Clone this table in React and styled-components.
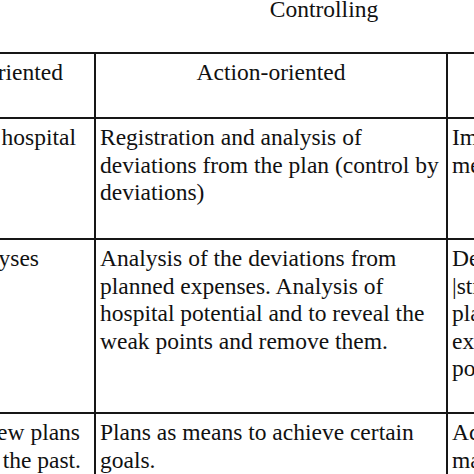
import styled, { createGlobalStyle } from 'styled-components'

const Global = createGlobalStyle`
  html, body {
    margin: 0;
    padding: 0;
    background: #FFFFFF;
    overflow: hidden;
  }
`

const Sheet = styled.div`
  width: 1148px;
  margin-left: -250px;
  font-family: "Liberation Serif", "Times New Roman", Times, serif;
  font-size: 23.5px;
  color: #111111;
`

const Caption = styled.div`
  height: 52px;
  line-height: 19px;
  text-align: center;
`

const Table = styled.div`
  display: grid;
  grid-template-columns: 342px 350px 448px;
  grid-template-rows: 63px 119px 172px 120px;
  gap: 2px;
  padding: 2px;
  background: #161616;
`

const Cell = styled.div`
  background: #FFFFFF;
  padding: 5px 4px;
  line-height: 27.5px;
  overflow: hidden;
  text-align: ${p => (p.$center ? 'center' : 'left')};
`

const Line = styled.span`
  display: block;
  white-space: nowrap;
`

const TailLine = styled(Line)`
  text-align: right;
  margin-right: ${p => p.$inset}px;
`

const ROWS = [
  {
    head: true,
    first: [{ text: 'Result-oriented', inset: 27 }],
    middle: ['Action-oriented'],
    last: ['Impulse-oriented'],
  },
  {
    first: [{ text: 'Planning of the hospital', inset: 14 }],
    middle: [
      'Registration and analysis of',
      'deviations from the plan (control by',
      'deviations)',
    ],
    last: ['Implementation of the', 'measures and control'],
  },
  {
    first: [{ text: 'Plan-fact analyses', inset: 51 }],
    middle: [
      'Analysis of the deviations from',
      'planned expenses. Analysis of',
      'hospital potential and to reveal the',
      'weak points and remove them.',
    ],
    last: ['Determination of', '|strategic', 'plans and', 'expected', 'potentials'],
  },
  {
    first: [
      { text: 'Development of new plans', inset: 10 },
      { text: 'extrapolating the past.', inset: 9 },
    ],
    middle: ['Plans as means to achieve certain', 'goals.'],
    last: ['Active planning', 'management'],
  },
]

export default function App() {
  return (
    <>
      <Global />
      <Sheet>
        <Caption>Controlling</Caption>
        <Table>
          {ROWS.map((row, i) => [
            <Cell key={`a${i}`}>
              {row.first.map(l => (
                <TailLine key={l.text} $inset={l.inset}>{l.text}</TailLine>
              ))}
            </Cell>,
            <Cell key={`b${i}`} $center={row.head}>
              {row.middle.map(t => <Line key={t}>{t}</Line>)}
            </Cell>,
            <Cell key={`c${i}`} $center={row.head}>
              {row.last.map(t => <Line key={t}>{t}</Line>)}
            </Cell>,
          ])}
        </Table>
      </Sheet>
    </>
  )
}
